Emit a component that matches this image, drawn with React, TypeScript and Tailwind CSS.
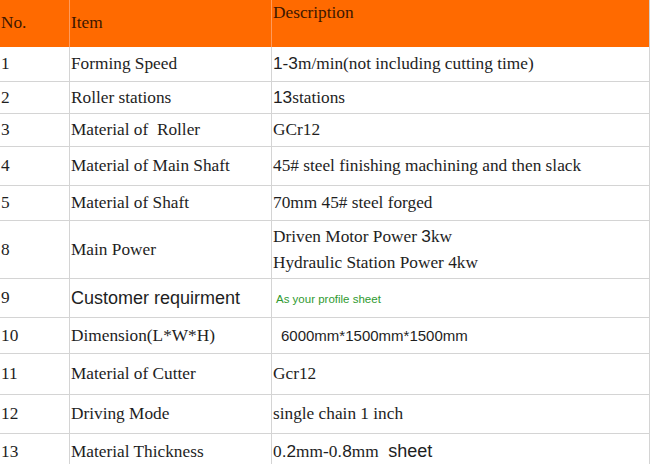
import React from "react";

const serif = "font-['Liberation_Serif','Times_New_Roman',serif]";
const sans = "font-['Liberation_Sans',Arial,sans-serif]";

function A({ children }: { children: React.ReactNode }) {
  return <span className={sans}>{children}</span>;
}

interface Row {
  no: string;
  item: React.ReactNode;
  desc: React.ReactNode;
  h: string;
}

const rows: Row[] = [
  {
    no: "1",
    item: "Forming Speed",
    desc: (
      <>
        <A>1-3</A>m/min(not including cutting time)
      </>
    ),
    h: "h-[35px]",
  },
  {
    no: "2",
    item: "Roller stations",
    desc: (
      <>
        <A>13</A>stations
      </>
    ),
    h: "h-[32px]",
  },
  { no: "3", item: "Material of  Roller", desc: "GCr12", h: "h-[33px]" },
  {
    no: "4",
    item: "Material of Main Shaft",
    desc: "45# steel finishing machining and then slack",
    h: "h-[39px]",
  },
  {
    no: "5",
    item: "Material of Shaft",
    desc: "70mm 45# steel forged",
    h: "h-[35px]",
  },
  {
    no: "8",
    item: "Main Power",
    desc: (
      <div className="leading-[26px]">
        <div>
          Driven Motor Power <A>3</A>kw
        </div>
        <div>Hydraulic Station Power 4kw</div>
      </div>
    ),
    h: "h-[58px]",
  },
  {
    no: "9",
    item: <span className={`${sans} text-[18px]`}>Customer requirment</span>,
    desc: (
      <span className={`${sans} text-[11.5px] text-[#2f9a2f] pl-[3px]`}>
        As your profile sheet
      </span>
    ),
    h: "h-[39px]",
  },
  {
    no: "10",
    item: "Dimension(L*W*H)",
    desc: (
      <span className={`${sans} text-[15px] pl-[8px]`}>
        6000mm*1500mm*1500mm
      </span>
    ),
    h: "h-[36px]",
  },
  { no: "11", item: "Material of Cutter", desc: "Gcr12", h: "h-[41px]" },
  { no: "12", item: "Driving Mode", desc: "single chain 1 inch", h: "h-[39px]" },
  {
    no: "13",
    item: "Material Thickness",
    desc: (
      <>
        0<A>.2</A>mm-0<A>.8</A>mm<A>
          {"  "}
          <span className="text-[18px]">sheet</span>
        </A>
      </>
    ),
    h: "h-[36px]",
  },
];

export default function App() {
  return (
    <div
      className={`w-[650px] h-[464px] overflow-hidden bg-white text-[17.3px] text-[#1e1e1e] ${serif}`}
    >
      <div className="flex h-[47px] bg-[#ff6a00] text-[#3d1700]">
        <div className="w-[70px] pt-[10px] pl-[1px] border-r border-[#ff9a5a]">
          No.
        </div>
        <div className="w-[202px] pt-[10px] pl-[1px] border-r border-[#ff9a5a]">
          Item
        </div>
        <div className="flex-1 pl-[1px] border-r border-[#d0d0d0]">
          Description
        </div>
      </div>
      {rows.map((r) => (
        <div key={r.no} className={`flex ${r.h}`}>
          <div className="w-[70px] flex items-center pl-[1px] border-r border-b border-[#d4d4d4]">
            {r.no}
          </div>
          <div className="w-[202px] flex items-center pl-[1px] border-r border-b border-[#d4d4d4] whitespace-pre">
            {r.item}
          </div>
          <div className="flex-1 flex items-center pl-[1px] border-r border-b border-[#d4d4d4] whitespace-pre">
            <div>{r.desc}</div>
          </div>
        </div>
      ))}
    </div>
  );
}
